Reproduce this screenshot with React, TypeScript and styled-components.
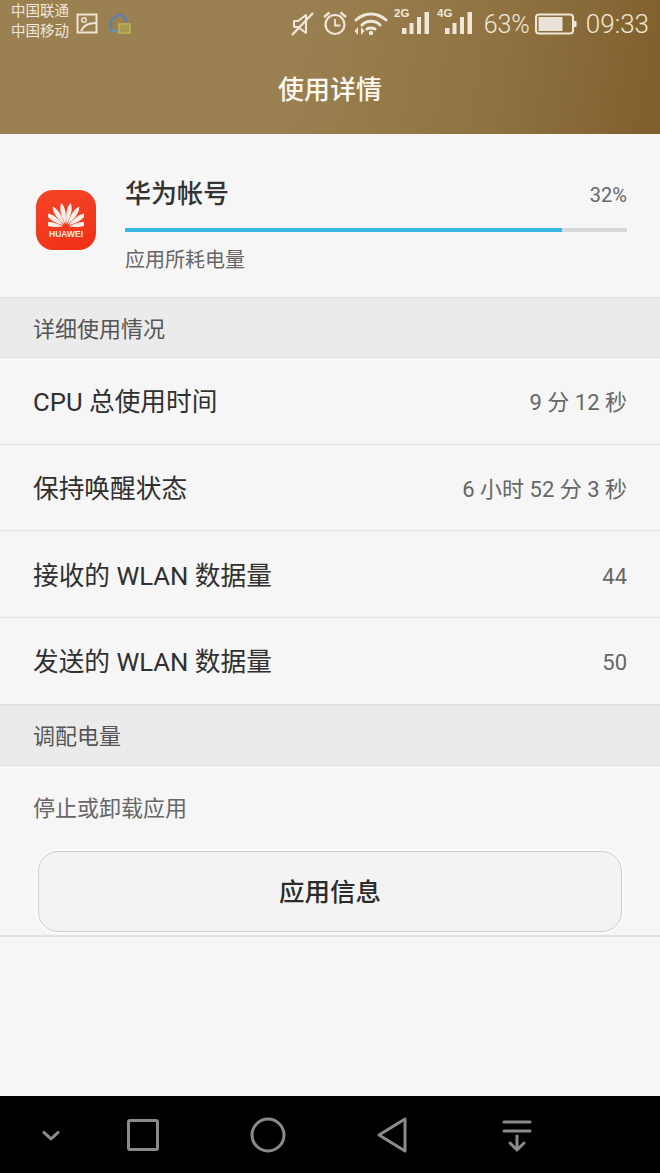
import React from 'react';
import styled, { createGlobalStyle } from 'styled-components';

const GlobalStyle = createGlobalStyle`
  html, body {
    margin: 0;
    padding: 0;
    background: #f6f6f6;
    font-family: Roboto, "Noto Sans CJK SC", "Noto Sans", sans-serif;
  }
  * { box-sizing: border-box; }
`;

const Screen = styled.div`
  width: 660px;
  height: 1173px;
  display: flex;
  flex-direction: column;
  overflow: hidden;
  background: #f6f6f6;
`;

const Header = styled.header`
  height: 134px;
  flex: none;
  background: linear-gradient(100deg, #9b8052 0%, #9a7f50 45%, #8f7240 75%, #7f5f2c 100%);
  display: flex;
  flex-direction: column;
`;

const StatusBar = styled.div`
  height: 48px;
  padding: 0 11px;
  display: flex;
  align-items: center;
  color: #efe8da;
`;

const Carriers = styled.div`
  font-size: 14.5px;
  line-height: 20px;
  width: 65px;
  margin-bottom: 4px;
`;

const StatusLeft = styled.div`
  display: flex;
  align-items: center;
  flex: 1;
`;

const StatusRight = styled.div`
  display: flex;
  align-items: center;
`;

const StatusGap = styled.span<{ $w: number }>`
  width: ${(p) => p.$w}px;
  flex: none;
`;

const Percent = styled.span`
  font-size: 25px;
  font-weight: 300;
  margin: 0 5px 0 11px;
`;

const Clock = styled.span`
  font-size: 26px;
  font-weight: 300;
  margin-left: 9px;
`;

const Title = styled.h1`
  margin: 0;
  font-size: 26px;
  font-weight: 500;
  color: #fbf8f2;
  text-align: center;
  line-height: 36px;
  padding-top: 24px;
`;

const AppCard = styled.section`
  height: 163px;
  flex: none;
  padding: 38px 33px 0 36px;
  display: flex;
`;

const AppIcon = styled.div`
  width: 60px;
  height: 60px;
  margin-top: 18px;
  border-radius: 17px;
  background: linear-gradient(160deg, #f6452a, #ee2f14);
  flex: none;
  display: flex;
  flex-direction: column;
  align-items: center;
  padding-top: 11px;
`;

const IconLabel = styled.span`
  font-size: 8.5px;
  font-weight: 700;
  line-height: 9px;
  color: #fbe6e0;
  font-family: "Liberation Sans", sans-serif;
  margin-top: 3px;
`;

const AppBody = styled.div`
  margin-left: 29px;
  flex: 1;
  display: flex;
  flex-direction: column;
`;

const AppRow = styled.div`
  display: flex;
  justify-content: space-between;
  align-items: center;
  height: 36px;
`;

const AppName = styled.span`
  font-size: 26px;
  color: #333;
  font-weight: 500;
  padding-top: 2px;
`;

const AppPercent = styled.span`
  font-size: 20px;
  color: #666;
  padding-top: 10px;
`;

const Track = styled.div`
  height: 4px;
  margin-top: 20px;
  background: #d5d9da;
`;

const TrackFill = styled.div`
  height: 100%;
  background: #35b8e4;
`;

const AppHint = styled.div`
  font-size: 20px;
  color: #666;
  margin-top: 13px;
  line-height: 30px;
`;

const SectionHead = styled.div`
  height: 61px;
  flex: none;
  background: #ebebeb;
  border-top: 1px solid #e2e2e2;
  border-bottom: 1px solid #e2e2e2;
  padding: 0 0 2px 33px;
  display: flex;
  align-items: center;
  font-size: 22px;
  color: #555;
`;

const Row = styled.div`
  height: 86.7px;
  flex: none;
  padding: 0 33px 2px;
  display: flex;
  justify-content: space-between;
  align-items: center;
  border-bottom: 1px solid #e2e2e2;
  &:last-of-type {
    border-bottom: none;
  }
`;

const RowLabel = styled.span`
  font-size: 25.7px;
  color: #303030;
  font-weight: 400;
`;

const RowValue = styled.span`
  font-size: 22px;
  line-height: 30px;
  color: #666;
  padding-top: 7px;
`;

const StopBlock = styled.section`
  height: 171px;
  flex: none;
  border-bottom: 2px solid #e2e2e2;
  padding: 0 38px;
  display: flex;
  flex-direction: column;
`;

const StopText = styled.div`
  margin: 27px 0 0 -5px;
  font-size: 22px;
  line-height: 32px;
  color: #666;
`;

const ActionButton = styled.button`
  margin-top: 26px;
  height: 81px;
  width: 584px;
  padding: 0 0 4px;
  background: #f3f3f3;
  border: 1px solid #cdcdcd;
  border-radius: 20px;
  box-shadow: 0 0 0 2px #fbfbfb;
  font-family: inherit;
  font-size: 25.5px;
  font-weight: 500;
  color: #2b2b2b;
`;

const Spacer = styled.div`
  flex: 1;
`;

const NavBar = styled.nav`
  height: 77px;
  flex: none;
  background: #000;
  display: flex;
  align-items: center;
  padding-left: 38px;
`;

const NavSlot = styled.div<{ $w: number }>`
  width: ${(p) => p.$w}px;
  display: flex;
  justify-content: flex-start;
`;

const ImageIcon = () => (
  <svg width="22" height="22" viewBox="0 0 22 22" fill="none" stroke="#efe4d2" strokeWidth="2">
    <rect x="1.5" y="1.5" width="19" height="18" />
    <circle cx="8" cy="7" r="2.3" strokeWidth="1.5" />
    <path d="M5 18 C8 12 12 10 20 10" />
  </svg>
);

const LockIcon = () => (
  <svg width="24" height="26" viewBox="0 0 24 26" fill="none">
    <path d="M3 20 V9 L11 3 L18 8 V11" stroke="#5f80a8" strokeWidth="2.6" strokeLinejoin="round" />
    <path d="M3 20 H9" stroke="#6b8fb5" strokeWidth="2.6" />
    <rect x="11" y="13" width="11" height="9" fill="#a49a52" stroke="#b7b552" strokeWidth="1.6" />
  </svg>
);

const MuteIcon = () => (
  <svg width="24" height="26" viewBox="0 0 24 26" fill="none" stroke="#efe8da" strokeWidth="2">
    <path d="M3 10 H7 L15 4 V22 L7 16 H3 Z" strokeLinejoin="round" />
    <path d="M1 24 L22 2" strokeWidth="2.2" />
  </svg>
);

const AlarmIcon = () => (
  <svg width="24" height="26" viewBox="0 0 24 26" fill="none" stroke="#efe8da" strokeWidth="2.2">
    <circle cx="12" cy="13.5" r="9.5" />
    <path d="M12 8 V14.5 H17.5" strokeWidth="1.8" />
    <path d="M1 6 L6.5 1.5 M23 6 L17.5 1.5" strokeWidth="2.4" />
  </svg>
);

const WifiIcon = () => (
  <svg width="34" height="24" viewBox="0 0 34 24" fill="none" stroke="#efe8da" strokeWidth="3" strokeLinecap="round">
    <path d="M2 8 C11 0 23 0 32 8" />
    <path d="M8 13 C13 8 21 8 26 13" />
    <path d="M13 17 C15 15.5 19 15.5 21 17" />
    <circle cx="17" cy="21" r="2.2" fill="#efe8da" stroke="none" />
    <path d="M4 15 V23 L0.5 19 Z M7 15 V23 L10.5 19 Z" fill="#efe8da" stroke="none" />
  </svg>
);

const SignalIcon = ({ label }: { label: string }) => (
  <svg width="36" height="34" viewBox="0 0 36 34" fill="#efe8da">
    <text x="0" y="10" fontSize="11.5" fontWeight="700" fontFamily="Liberation Sans, sans-serif">{label}</text>
    <rect x="8" y="21" width="4.5" height="6" />
    <rect x="15.5" y="16" width="4" height="11" />
    <rect x="23" y="10" width="4" height="17" />
    <rect x="30.5" y="5" width="4.5" height="22" />
  </svg>
);

const BatteryIcon = () => (
  <svg width="42" height="22" viewBox="0 0 42 22" fill="none">
    <rect x="1" y="1.5" width="37" height="19" rx="3" stroke="#efe8da" strokeWidth="2" />
    <rect x="3.5" y="4" width="24" height="14" fill="#e8e3d6" />
    <rect x="39" y="8" width="2.5" height="6" fill="#efe8da" />
  </svg>
);

const HuaweiLogo = () => (
  <svg width="36" height="26" viewBox="-18 -26 36 26" fill="#fbeee9">
    {[-80, -56, -33, -11, 11, 33, 56, 80].map((a) => (
      <path key={a} d="M0 -3 C-1.6 -8 -4.4 -18 0 -24.5 C4.4 -18 1.6 -8 0 -3 Z" transform={`rotate(${a} 0 0)`} />
    ))}
  </svg>
);

const NavIcon = ({ children, size = 40 }: { children: React.ReactNode; size?: number }) => (
  <svg width={size} height={size} viewBox="0 0 40 40" fill="none" stroke="#8b8b8b" strokeWidth="3" strokeLinejoin="round" strokeLinecap="round">
    {children}
  </svg>
);

const rows = [
  { label: 'CPU 总使用时间', value: '9 分 12 秒' },
  { label: '保持唤醒状态', value: '6 小时 52 分 3 秒' },
  { label: '接收的 WLAN 数据量', value: '44' },
  { label: '发送的 WLAN 数据量', value: '50' },
];

export default function App() {
  return (
    <Screen>
      <GlobalStyle />
      <Header>
        <StatusBar>
          <StatusLeft>
            <Carriers>
              <div>中国联通</div>
              <div>中国移动</div>
            </Carriers>
            <ImageIcon />
            <StatusGap $w={10} />
            <LockIcon />
          </StatusLeft>
          <StatusRight>
            <MuteIcon />
            <StatusGap $w={8} />
            <AlarmIcon />
            <StatusGap $w={7} />
            <WifiIcon />
            <StatusGap $w={6} />
            <SignalIcon label="2G" />
            <StatusGap $w={7} />
            <SignalIcon label="4G" />
            <Percent>63%</Percent>
            <BatteryIcon />
            <Clock>09:33</Clock>
          </StatusRight>
        </StatusBar>
        <Title>使用详情</Title>
      </Header>

      <AppCard>
        <AppIcon>
          <HuaweiLogo />
          <IconLabel>HUAWEI</IconLabel>
        </AppIcon>
        <AppBody>
          <AppRow>
            <AppName>华为帐号</AppName>
            <AppPercent>32%</AppPercent>
          </AppRow>
          <Track>
            <TrackFill style={{ width: '87%' }} />
          </Track>
          <AppHint>应用所耗电量</AppHint>
        </AppBody>
      </AppCard>

      <SectionHead>详细使用情况</SectionHead>
      {rows.map((r) => (
        <Row key={r.label}>
          <RowLabel>{r.label}</RowLabel>
          <RowValue>{r.value}</RowValue>
        </Row>
      ))}
      <SectionHead>调配电量</SectionHead>

      <StopBlock>
        <StopText>停止或卸载应用</StopText>
        <ActionButton>应用信息</ActionButton>
      </StopBlock>

      <Spacer />

      <NavBar>
        <NavSlot $w={85}>
          <NavIcon size={26}>
            <path d="M9 16 L20 26 L31 16" strokeWidth="4.5" />
          </NavIcon>
        </NavSlot>
        <NavSlot $w={124.5}>
          <NavIcon>
            <rect x="5.5" y="5.5" width="29" height="29" rx="1.5" />
          </NavIcon>
        </NavSlot>
        <NavSlot $w={125}>
          <NavIcon>
            <circle cx="20" cy="20" r="16" />
          </NavIcon>
        </NavSlot>
        <NavSlot $w={125}>
          <NavIcon>
            <path d="M6 20 L32 4 V36 Z" />
          </NavIcon>
        </NavSlot>
        <NavSlot $w={60}>
          <NavIcon>
            <path d="M6 7 H32 M6 16 H32 M19 21 V35 M12 28 L19 35 L26 28" />
          </NavIcon>
        </NavSlot>
      </NavBar>
    </Screen>
  );
}
